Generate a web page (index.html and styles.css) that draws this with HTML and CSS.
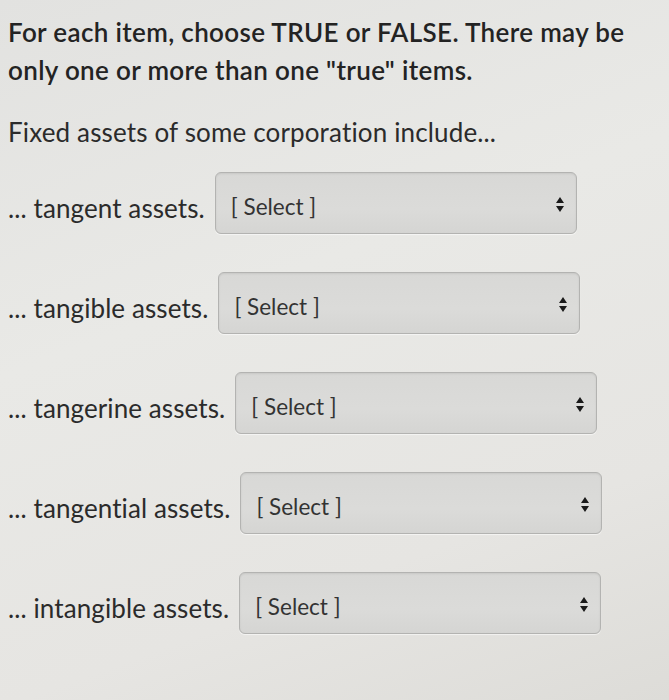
FILE: index.html
```html
<!DOCTYPE html>
<html lang="en">
<head>
<meta charset="utf-8">
<title>Quiz question</title>
<link rel="stylesheet" href="styles.css">
</head>
<body>
<main class="question">
  <p class="prompt">For each item, choose TRUE or FALSE. There may be only one or more than one "true" items.</p>
  <p class="stem">Fixed assets of some corporation include...</p>
  <div class="items">
    <div class="row">
      <span class="label">... tangent assets.</span>
      <div class="select"><span class="select-text">[ Select ]</span><span class="arrows"><svg width="8" height="15" viewBox="0 0 8 15"><path d="M4 0 L8 6 L0 6 Z M0 9 L8 9 L4 15 Z" fill="#1a1a1a"/></svg></span></div>
    </div>
    <div class="row">
      <span class="label">... tangible assets.</span>
      <div class="select"><span class="select-text">[ Select ]</span><span class="arrows"><svg width="8" height="15" viewBox="0 0 8 15"><path d="M4 0 L8 6 L0 6 Z M0 9 L8 9 L4 15 Z" fill="#1a1a1a"/></svg></span></div>
    </div>
    <div class="row">
      <span class="label">... tangerine assets.</span>
      <div class="select"><span class="select-text">[ Select ]</span><span class="arrows"><svg width="8" height="15" viewBox="0 0 8 15"><path d="M4 0 L8 6 L0 6 Z M0 9 L8 9 L4 15 Z" fill="#1a1a1a"/></svg></span></div>
    </div>
    <div class="row">
      <span class="label">... tangential assets.</span>
      <div class="select"><span class="select-text">[ Select ]</span><span class="arrows"><svg width="8" height="15" viewBox="0 0 8 15"><path d="M4 0 L8 6 L0 6 Z M0 9 L8 9 L4 15 Z" fill="#1a1a1a"/></svg></span></div>
    </div>
    <div class="row">
      <span class="label">... intangible assets.</span>
      <div class="select"><span class="select-text">[ Select ]</span><span class="arrows"><svg width="8" height="15" viewBox="0 0 8 15"><path d="M4 0 L8 6 L0 6 Z M0 9 L8 9 L4 15 Z" fill="#1a1a1a"/></svg></span></div>
    </div>
  </div>
</main>
</body>
</html>
```
FILE: styles.css
```css
html, body {
  margin: 0;
  padding: 0;
}
body {
  width: 669px;
  height: 700px;
  overflow: hidden;
  background: linear-gradient(160deg, #e2e2e0 0%, #e9e9e6 40%, #e6e5e2 75%, #dddcd8 100%);
  font-family: Lato, "Open Sans", sans-serif;
  color: #2b2b2b;
}
.question {
  padding: 13px 0 0 8px;
}
.prompt {
  margin: 0;
  width: 650px;
  font-size: 26px;
  line-height: 38px;
  font-weight: 600;
  letter-spacing: 0.35px;
  color: #232323;
}
.stem {
  margin: 24px 0 0 0;
  font-size: 26px;
  line-height: 38px;
  font-weight: 400;
  letter-spacing: 0.15px;
}
.items {
  display: flex;
  flex-direction: column;
  gap: 38px;
  margin-top: 21px;
}
.row {
  display: flex;
  align-items: flex-end;
  gap: 10px;
}
.label {
  font-size: 26px;
  line-height: 31px;
  padding-bottom: 10px;
  white-space: nowrap;
  letter-spacing: 0.1px;
}
.select {
  box-sizing: border-box;
  width: 362px;
  height: 62px;
  border: 1px solid #b3b3b1;
  border-radius: 6px;
  background: linear-gradient(180deg, #d8d8d6 0%, #dbdbd9 60%, #d5d5d3 100%);
  box-shadow: inset 0 1px 2px rgba(0, 0, 0, 0.08), 0 1px 1px rgba(255, 255, 255, 0.6);
  display: flex;
  align-items: flex-start;
  justify-content: space-between;
  padding: 20px 12px 0 15px;
}
.select-text {
  font-size: 22.5px;
  line-height: 27px;
  color: #333;
}
.arrows {
  display: flex;
  padding-top: 4px;
}
```
